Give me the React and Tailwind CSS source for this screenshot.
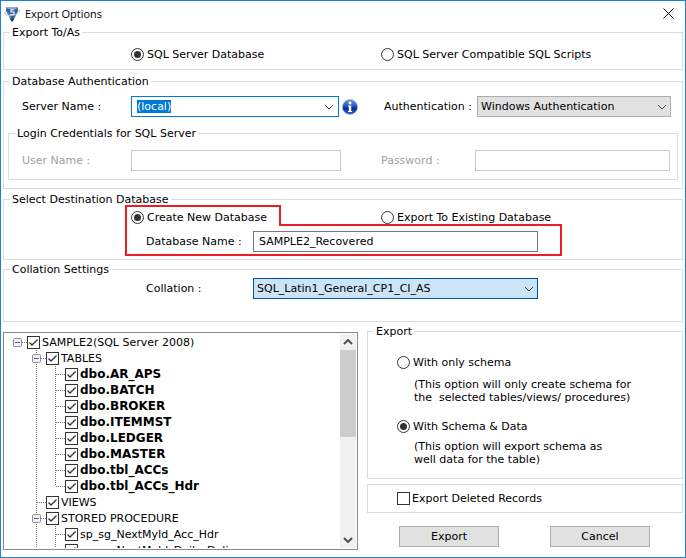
import { useEffect, useRef } from "react";

const tree = {
  label: "SAMPLE2(SQL Server 2008)",
  children: [
    {
      label: "TABLES",
      bold: true,
      children: [
        "dbo.AR_APS",
        "dbo.BATCH",
        "dbo.BROKER",
        "dbo.ITEMMST",
        "dbo.LEDGER",
        "dbo.MASTER",
        "dbo.tbl_ACCs",
        "dbo.tbl_ACCs_Hdr",
      ],
    },
    { label: "VIEWS", children: [] },
    {
      label: "STORED PROCEDURE",
      children: ["sp_sg_NextMyId_Acc_Hdr", "sp_sg_NextMyId_Daily_Deli"],
    },
  ],
};

const Chevron = ({ className = "", up = false }) => (
  <svg viewBox="0 0 10 6" className={`pointer-events-none h-[6px] w-[10px] ${className}`} fill="none" stroke="currentColor">
    <path d={up ? "M1 5 5 1l4 4" : "M1 1l4 4 4-4"} />
  </svg>
);

const GroupBox = ({ title, className = "", children }) => (
  <fieldset className={`min-w-0 border border-[#dcdcdc] ${className}`}>
    {title && <legend className="ml-[6px] px-[2px] leading-[13px]">{title}</legend>}
    {children}
  </fieldset>
);

const Radio = ({ name, label, defaultChecked }) => (
  <label className="flex items-center gap-[3px]">
    <input
      type="radio"
      name={name}
      defaultChecked={defaultChecked}
      className="grid size-[13px] shrink-0 appearance-none place-items-center rounded-full border border-[#333] bg-white before:size-[7px] before:rounded-full checked:before:bg-[#333]"
    />
    <span>{label}</span>
  </label>
);

const Checkbox = ({ label, defaultChecked, bold }) => (
  <label className={`flex items-center gap-[2px] whitespace-nowrap ${bold ? "text-[12px] font-bold" : ""}`}>
    <span className="relative flex shrink-0">
      <input
        type="checkbox"
        defaultChecked={defaultChecked}
        className="peer size-[13px] appearance-none border border-[#333] bg-white"
      />
      <svg
        viewBox="0 0 13 13"
        className="pointer-events-none absolute inset-0 hidden size-[13px] peer-checked:block"
        fill="none"
        stroke="#333"
        strokeWidth="1.3"
      >
        <path d="M2.5 6.5 5 9l5.5-5.5" />
      </svg>
    </span>
    <span>{label}</span>
  </label>
);

const Select = ({ id, options, className = "" }) => (
  <div className="relative">
    <select id={id} className={`h-[21px] w-full appearance-none border px-[3px] outline-none ${className}`}>
      {options.map((option) => (
        <option key={option}>{option}</option>
      ))}
    </select>
    <Chevron className="absolute right-[4px] top-[8px] text-[#444]" />
  </div>
);

// one 19x16 cell of the dotted lines left of a tree row
const Guide = ({ line = "full", branch, expander }) => (
  <svg viewBox="0 0 19 16" className="h-[16px] w-[19px] shrink-0" fill="none" stroke="#777" strokeDasharray="1 1">
    {line === "full" && <path d="M9.5 0v16" />}
    {line === "half" && <path d="M9.5 0v8" />}
    {branch && <path d="M10 8.5h9" />}
    {expander && (
      <g strokeDasharray="none">
        <rect x="5.5" y="4.5" width="8" height="8" rx="1" fill="#f4f4f4" stroke="#919191" />
        <path d="M7 8.5h5" stroke="#3f62b5" />
      </g>
    )}
  </svg>
);

const Tree = () => (
  <ul className="min-w-0 flex-1 overflow-hidden pl-[3px]">
    <li>
      <div className="flex h-[16px]">
        <Guide line="none" branch expander />
        <Checkbox label={tree.label} defaultChecked />
      </div>
      <ul>
        {tree.children.map((group) => (
          <li key={group.label}>
            <div className="flex h-[16px] pl-[19px]">
              <Guide branch expander={group.children.length > 0} />
              <Checkbox label={group.label} defaultChecked />
            </div>
            <ul>
              {group.children.map((item, i) => (
                <li key={item} className="flex h-[16px] pl-[19px]">
                  <Guide />
                  <Guide line={i === group.children.length - 1 ? "half" : "full"} branch />
                  <Checkbox label={item} bold={group.bold} defaultChecked />
                </li>
              ))}
            </ul>
          </li>
        ))}
      </ul>
    </li>
  </ul>
);

const Logo = () => (
  <svg viewBox="0 0 16 16" className="size-[16px]">
    <path d="M2.5 1h11L14 5 9 15H7.500L2 5z" fill="#2f609f" />
    <path d="M2.5 1h11L12 3H4z" fill="#86acd6" />
    <path d="M2 4.500 7.500 14.500 6.500 9z" fill="#7d93ad" />
    <path d="M10.500 3.800H7v2.200h3v2.700H6" fill="none" stroke="#fff" strokeWidth="1.1" />
    <path d="M2 5C-1 8 3 10 8 9.500s9-4 6.500-6" fill="none" stroke="#b4bcc8" />
    <path d="M6 12.500h4L8.800 15.500H7.400z" fill="#26384f" />
  </svg>
);

const InfoIcon = () => (
  <svg viewBox="0 0 16 16" className="size-[16px]">
    <defs>
      <linearGradient id="info" x1="0" y1="0" x2="0" y2="1">
        <stop offset="0" stopColor="#6f9ae6" />
        <stop offset="0.5" stopColor="#1c4cb4" />
        <stop offset="0.6" stopColor="#06288a" />
        <stop offset="1" stopColor="#3e70cf" />
      </linearGradient>
    </defs>
    <circle cx="8" cy="8" r="7.600" fill="url(#info)" stroke="#9db8e6" strokeWidth="0.600" />
    <circle cx="8" cy="4" r="1.500" fill="#fff" />
    <path d="M6 6.500h3.200V12H10v1H6v-1h.8V7.500H6z" fill="#fff" />
  </svg>
);

export default function App() {
  const serverRef = useRef(null);

  useEffect(() => {
    serverRef.current.focus();
    serverRef.current.select();
  }, []);

  return (
    <form
      onSubmit={(e) => e.preventDefault()}
      className="flex h-screen flex-col border border-[#1883d7] bg-white px-[2px] font-['DejaVu_Sans',Verdana,sans-serif] text-[11px] leading-[13px] text-black"
    >
      <header className="flex h-[25px] shrink-0 items-center justify-between pl-px pr-[9px]">
        <div className="flex items-center gap-[5px]">
          <Logo />
          <h1 className="font-['Open_Sans','Segoe_UI',sans-serif]">Export Options</h1>
        </div>
        <button type="button" aria-label="Close">
          <svg viewBox="0 0 11 11" className="size-[11px]" stroke="#000" fill="none">
            <path d="M.5.5l10 10M10.500.5l-10 10" />
          </svg>
        </button>
      </header>

      <GroupBox title="Export To/As">
        <div className="grid grid-cols-[250px_1fr] pb-[8px] pl-[127px] pt-[9px]">
          <Radio name="target" label="SQL Server Database" defaultChecked />
          <Radio name="target" label="SQL Server Compatible SQL Scripts" />
        </div>
      </GroupBox>

      <GroupBox title="Database Authentication" className="mt-[5px]">
        <div className="flex items-center pl-[18px] pr-[11px] pt-[8px]">
          <label htmlFor="server" className="w-[109px] shrink-0">
            Server Name :
          </label>
          <div className="flex h-[21px] w-[208px] items-center border border-[#0078d7] pl-[5px] pr-[4px]">
            <input
              id="server"
              ref={serverRef}
              role="combobox"
              aria-expanded="false"
              aria-controls="server"
              defaultValue="(local)"
              className="min-w-0 flex-1 outline-none selection:bg-[#0078d7] selection:text-white"
            />
            <button type="button" aria-label="Show servers">
              <Chevron className="text-[#444]" />
            </button>
          </div>
          <button type="button" aria-label="Server information" className="ml-[3px]">
            <InfoIcon />
          </button>
          <label htmlFor="authentication" className="ml-[26px] w-[93px] shrink-0">
            Authentication :
          </label>
          <div className="flex-1">
            <Select id="authentication" options={["Windows Authentication", "SQL Server Authentication"]} className="border-[#adadad] bg-[#e1e1e1]" />
          </div>
        </div>

        <GroupBox title="Login Credentials for SQL Server" className="mx-[4px] mb-[8px] mt-[10px]">
          <div className="flex items-center pb-[8px] pl-[13px] pr-[7px] pt-[10px] text-[#a0a0a0]">
            <label htmlFor="user" className="w-[109px] shrink-0">
              User Name :
            </label>
            <input id="user" disabled className="h-[21px] w-[210px] border border-[#ccc] px-[5px]" />
            <label htmlFor="password" className="ml-[40px] w-[94px] shrink-0">
              Password :
            </label>
            <input id="password" type="password" disabled className="h-[21px] min-w-0 flex-1 border border-[#ccc] px-[5px]" />
          </div>
        </GroupBox>
      </GroupBox>

      <GroupBox title="Select Destination Database" className="relative mt-[4px]">
        <svg viewBox="0 0 438 52" className="pointer-events-none absolute -top-px left-[121px] h-[52px] w-[438px]" fill="none" stroke="#ee1c25" strokeWidth="2">
          <path d="M1 1h154v19h281v30H1z" />
        </svg>
        <div className="grid grid-cols-[250px_1fr] pl-[127px] pt-[5px]">
          <Radio name="destination" label="Create New Database" defaultChecked />
          <Radio name="destination" label="Export To Existing Database" />
        </div>
        <div className="flex items-center pb-[7px] pl-[142px] pt-[7px]">
          <label htmlFor="database" className="w-[107px] shrink-0">
            Database Name :
          </label>
          <input id="database" defaultValue="SAMPLE2_Recovered" className="h-[21px] w-[285px] border border-[#7a7a7a] px-[5px] outline-none" />
        </div>
      </GroupBox>

      <GroupBox title="Collation Settings" className="mt-[3px]">
        <div className="flex items-center pb-[22px] pl-[142px] pt-[2px]">
          <label htmlFor="collation" className="w-[107px] shrink-0">
            Collation :
          </label>
          <div className="w-[285px]">
            <Select id="collation" options={["SQL_Latin1_General_CP1_CI_AS", "Latin1_General_CI_AS"]} className="border-[#00549a] bg-[#cce4f7]" />
          </div>
        </div>
      </GroupBox>

      <div className="flex min-h-0 flex-1 gap-[9px] pb-[7px] pt-[3px]">
        <div className="mt-[7px] flex w-[355px] shrink-0 border border-[#828790] p-px">
          <Tree />
          <div className="flex w-[16px] shrink-0 flex-col items-center bg-[#f0f0f0] text-[#505050]">
            <Chevron up className="my-[5px] shrink-0 stroke-2" />
            <div className="h-[87px] w-full bg-[#cdcdcd]" />
            <Chevron className="my-[5px] mt-auto shrink-0 stroke-2" />
          </div>
        </div>

        <div className="min-w-0 flex-1">
          <GroupBox title="Export">
            <div className="pb-[12px] pl-[29px] pt-[18px]">
              <Radio name="mode" label="With only schema" />
              <p className="whitespace-pre pl-[17px] pt-[9px]">
                {"(This option will only create schema for\nthe  selected tables/views/ procedures)"}
              </p>
              <div className="pt-[16px]">
                <Radio name="mode" label="With Schema & Data" defaultChecked />
              </div>
              <p className="whitespace-pre pl-[17px] pt-[7px]">
                {"(This option will export schema as\nwell data for the table)"}
              </p>
            </div>
          </GroupBox>
          <GroupBox className="mt-[5px] py-[7px] pl-[29px]">
            <Checkbox label="Export Deleted Records" />
          </GroupBox>
          <div className="flex gap-[51px] pl-[32px] pt-[13px]">
            <button type="submit" className="h-[21px] w-[100px] border border-[#adadad] bg-[#e1e1e1]">
              Export
            </button>
            <button type="button" className="h-[21px] w-[100px] border border-[#adadad] bg-[#e1e1e1]">
              Cancel
            </button>
          </div>
        </div>
      </div>
    </form>
  );
}
